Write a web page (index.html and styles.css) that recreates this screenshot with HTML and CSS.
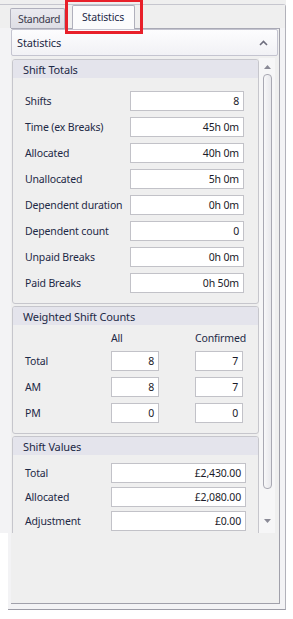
FILE: index.html
```html
<!DOCTYPE html>
<html lang="en">
<head>
    <meta charset="UTF-8">
    <title>Statistics</title>
    <link rel="stylesheet" href="styles.css">
</head>
<body>
    <div class="window">
        <div class="frame">
            <div class="tabs">
                <div class="tab">Standard</div>
                <div class="tab tab-active">Statistics</div>
            </div>
            <div class="page">
                <div class="panel-head">
                    <span>Statistics</span>
                    <svg class="chevron" width="9" height="6" viewBox="0 0 9 6"><path d="M1 5 L4.5 1.5 L8 5" fill="none" stroke="#6e6e7e" stroke-width="1.6"/></svg>
                </div>
                <div class="scroller">
                    <div class="groups">
                        <div class="group">
                            <div class="group-title">Shift Totals</div>
                            <div class="group-body totals">
                                <span class="label">Shifts</span><div class="field">8</div>
                                <span class="label">Time (ex Breaks)</span><div class="field">45h 0m</div>
                                <span class="label">Allocated</span><div class="field">40h 0m</div>
                                <span class="label">Unallocated</span><div class="field">5h 0m</div>
                                <span class="label">Dependent duration</span><div class="field">0h 0m</div>
                                <span class="label">Dependent count</span><div class="field">0</div>
                                <span class="label">Unpaid Breaks</span><div class="field">0h 0m</div>
                                <span class="label">Paid Breaks</span><div class="field">0h 50m</div>
                            </div>
                        </div>
                        <div class="group">
                            <div class="group-title">Weighted Shift Counts</div>
                            <div class="group-body weighted">
                                <span></span><span class="col-head">All</span><span class="col-head">Confirmed</span>
                                <span class="label">Total</span><div class="field">8</div><div class="field">7</div>
                                <span class="label">AM</span><div class="field">8</div><div class="field">7</div>
                                <span class="label">PM</span><div class="field">0</div><div class="field">0</div>
                            </div>
                        </div>
                        <div class="group">
                            <div class="group-title">Shift Values</div>
                            <div class="group-body values">
                                <span class="label">Total</span><div class="field">£2,430.00</div>
                                <span class="label">Allocated</span><div class="field">£2,080.00</div>
                                <span class="label">Adjustment</span><div class="field">£0.00</div>
                            </div>
                        </div>
                    </div>
                    <div class="scrollbar">
                        <svg width="7" height="4" viewBox="0 0 7 4"><path d="M0 4 L3.5 0 L7 4 Z" fill="#8a8a96"/></svg>
                        <div class="thumb"></div>
                        <svg class="arrow-down" width="7" height="4" viewBox="0 0 7 4"><path d="M0 0 L3.5 4 L7 0 Z" fill="#8a8a96"/></svg>
                    </div>
                </div>
            </div>
        </div>
    </div>
</body>
</html>
```

FILE: styles.css
```css
body {
    margin: 0;
    background: #ffffff;
    font-family: "Noto Sans", "Open Sans", sans-serif;
    font-size: 10.5px;
    letter-spacing: -0.15px;
    color: #1d2946;
}

.window {
    position: relative;
    width: 286px;
    height: 610px;
    padding-top: 4px;
    box-sizing: border-box;
    background: #efefef;
    display: flex;
    flex-direction: column;
}

/* white strip under the scroll view on the left */
.window::before {
    content: "";
    position: absolute;
    left: 0;
    top: 533px;
    bottom: 0;
    width: 8px;
    background: #ffffff;
    z-index: 2;
}

.frame {
    flex: 1;
    display: flex;
    flex-direction: column;
    border-top: 1px solid #c6c6ce;
    border-right: 1px solid #b2b2ba;
    border-bottom: 1px solid #9c9ca6;
    border-top-right-radius: 3px;
    background: #f3f3f5;
}

.tabs {
    height: 23px;
    display: flex;
    align-items: flex-end;
    gap: 7px;
    padding-left: 10px;
    background: #efefef;
}

.tab {
    width: 55px;
    height: 20px;
    box-sizing: border-box;
    padding-left: 7px;
    display: flex;
    align-items: center;
    overflow: hidden;
    white-space: nowrap;
    letter-spacing: -0.35px;
    border: 1px solid #b0b0bc;
    border-bottom: none;
    border-radius: 2px 2px 0 0;
    background: linear-gradient(#eaeaef, #dedee5);
    color: #3a3a4c;
}

.tab-active {
    position: relative;
    overflow: visible;
    width: 63px;
    height: 24px;
    margin-bottom: -1px;
    padding: 0 0 2px 9px;
    letter-spacing: -0.15px;
    background: #fbfbfc;
    color: #1d2946;
    z-index: 1;
}

.tab-active::after {
    content: "";
    position: absolute;
    left: -8px;
    top: -7px;
    width: 78px;
    height: 35px;
    border: 3px solid #e8202a;
    box-sizing: border-box;
}

.page {
    flex: 1;
    margin: 0 5px 5px 11px;
    border-top: 1px solid #a9a9b5;
    border-right: 1px solid #a0a0aa;
    border-bottom: 1px solid #a0a0aa;
    background: #efefef;
    display: flex;
    flex-direction: column;
}

.panel-head {
    height: 27px;
    box-sizing: border-box;
    margin-right: 1px;
    padding: 0 9px 0 5px;
    display: flex;
    align-items: center;
    justify-content: space-between;
    border: 1px solid #c4c4d0;
    border-radius: 2px;
    background: linear-gradient(#fdfdfe, #f1f1f5);
    font-size: 11px;
}

.scroller {
    height: 475px;
    margin: 2px 4px 0 1px;
    display: flex;
    overflow: hidden;
}

.groups {
    width: 247px;
    padding-top: 1px;
    display: flex;
    flex-direction: column;
    gap: 2px;
}

.group {
    border: 1px solid #c6c6cc;
    border-radius: 3px;
    flex-shrink: 0;
}

.group-title {
    height: 18px;
    padding-left: 10px;
    display: flex;
    align-items: center;
    background: #e4e4ec;
    border-radius: 2px 2px 0 0;
    font-size: 11px;
}

.group-body {
    display: grid;
    align-items: center;
    padding: 13px 14px 10px 12px;
    row-gap: 6px;
}

.totals {
    grid-template-columns: 105px 1fr;
    grid-auto-rows: 20px;
}

.weighted {
    grid-template-columns: 86px 84px 48px;
    grid-template-rows: 14px repeat(3, 20px);
    padding-top: 6px;
}

.weighted .field {
    width: 48px;
}

.values {
    grid-template-columns: 86px 1fr;
    grid-auto-rows: 20px;
    row-gap: 4px;
    padding: 8px 12px 10px 12px;
}

.col-head {
    line-height: 14px;
}

.field {
    height: 20px;
    box-sizing: border-box;
    padding-right: 4px;
    display: flex;
    align-items: center;
    justify-content: flex-end;
    background: #ffffff;
    border: 1px solid #c2c2c8;
    color: #1a1a28;
}

.scrollbar {
    width: 16px;
    display: flex;
    flex-direction: column;
    align-items: center;
    padding: 7px 0 10px;
    background: #f6f6f7;
}

.thumb {
    width: 7px;
    height: 413px;
    margin-top: 5px;
    border: 1px solid #a9a9b3;
    border-radius: 4px;
    background: linear-gradient(90deg, #f8f8f9, #e8e8ec);
}

.arrow-down {
    margin-top: auto;
}
```
